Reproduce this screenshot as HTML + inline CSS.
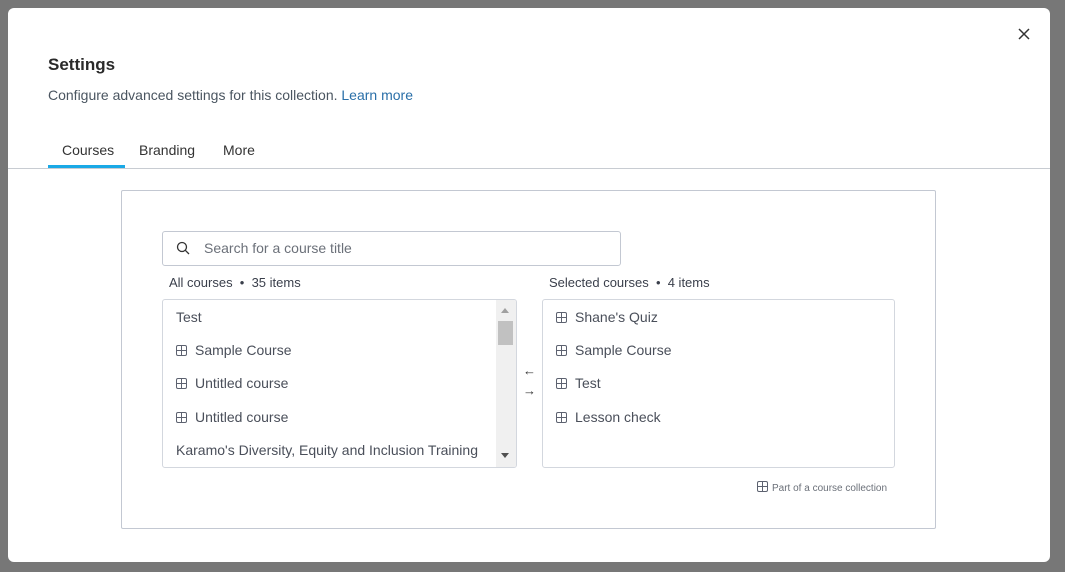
<!DOCTYPE html>
<html><head><style>
body{margin:0;width:1065px;height:572px;background:#777;font-family:"Liberation Sans",sans-serif;position:relative;overflow:hidden;color:#3a3f4b}
.m{position:absolute;left:8px;top:8px;width:1042px;height:554px;background:#fff;border-radius:6px}
.a{position:absolute;white-space:nowrap}
.g{display:inline-block;width:11px;height:11px;border:1px solid #5d6270;border-radius:2px;position:relative;vertical-align:-1px;margin-right:8px;box-sizing:border-box}
.g:before{content:"";position:absolute;left:4px;top:0;width:1px;height:9px;background:#5d6270}
.g:after{content:"";position:absolute;left:0;top:4px;width:9px;height:1px;background:#5d6270}
.it{position:absolute;font-size:14px;color:#4a4f5a;white-space:nowrap}
</style></head><body>
<div class="m">
<svg class="a" style="left:1010px;top:20px" width="12" height="12"><path d="M1 1L11 11M11 1L1 11" stroke="#333" stroke-width="1.5"/></svg>
<div class="a" style="left:40px;top:47px;font-size:17px;font-weight:bold;color:#2a2a2a">Settings</div>
<div class="a" style="left:40px;top:79px;font-size:14px;color:#4a5560">Configure advanced settings for this collection. <span style="color:#2a6fa8">Learn more</span></div>
<div class="a" style="left:54px;top:134px;font-size:14px;color:#333">Courses</div>
<div class="a" style="left:131px;top:134px;font-size:14px;color:#333">Branding</div>
<div class="a" style="left:215px;top:134px;font-size:14px;color:#333">More</div>
<div class="a" style="left:40px;top:157px;width:77px;height:3px;background:#1aa9e6"></div>
<div class="a" style="left:0;top:160px;width:1042px;height:1px;background:#c8ccd2"></div>
<div class="a" style="left:113px;top:182px;width:813px;height:337px;border:1px solid #c3c8d2;border-radius:2px"></div>
<div class="a" style="left:154px;top:223px;width:457px;height:33px;border:1px solid #c3c8d2;border-radius:3px"></div>
<svg class="a" style="left:168px;top:233px" width="14" height="14"><circle cx="6" cy="6" r="4.5" fill="none" stroke="#333" stroke-width="1.3"/><path d="M9.3 9.3L13 13" stroke="#333" stroke-width="1.3"/></svg>
<div class="a" style="left:196px;top:232px;font-size:14px;color:#6b7079">Search for a course title</div>
<div class="a" style="left:161px;top:267px;font-size:13px;color:#3a3f4b">All courses &nbsp;•&nbsp; 35 items</div>
<div class="a" style="left:541px;top:267px;font-size:13px;color:#3a3f4b">Selected courses &nbsp;•&nbsp; 4 items</div>
<div class="a" style="left:154px;top:291px;width:353px;height:167px;border:1px solid #d3d7de;border-radius:3px;overflow:hidden">
 <div class="a" style="right:0;top:0;width:20px;height:167px;background:#f0f0f0"></div>
 <div class="a" style="right:3px;top:21px;width:15px;height:24px;background:#c1c1c1"></div>
 <div class="a" style="right:7px;top:8px;border:4px solid transparent;border-bottom:5px solid #a0a0a0;border-top:0"></div>
 <div class="a" style="right:7px;top:153px;border:4px solid transparent;border-top:5px solid #505050;border-bottom:0"></div>
</div>
<div class="it" style="left:168px;top:301px">Test</div>
<div class="it" style="left:168px;top:334px"><span class="g"></span>Sample Course</div>
<div class="it" style="left:168px;top:367px"><span class="g"></span>Untitled course</div>
<div class="it" style="left:168px;top:401px"><span class="g"></span>Untitled course</div>
<div class="it" style="left:168px;top:434px">Karamo's Diversity, Equity and Inclusion Training</div>
<div class="a" style="left:515px;top:355px;font-size:13px;color:#333">←</div>
<div class="a" style="left:515px;top:375px;font-size:13px;color:#333">→</div>
<div class="a" style="left:534px;top:291px;width:351px;height:167px;border:1px solid #d3d7de;border-radius:3px"></div>
<div class="it" style="left:548px;top:301px"><span class="g"></span>Shane's Quiz</div>
<div class="it" style="left:548px;top:334px"><span class="g"></span>Sample Course</div>
<div class="it" style="left:548px;top:367px"><span class="g"></span>Test</div>
<div class="it" style="left:548px;top:401px"><span class="g"></span>Lesson check</div>
<div class="a" style="left:749px;top:473px;font-size:10px;color:#6b7079"><span class="g" style="margin-right:4px"></span>Part of a course collection</div>
</div>
</body></html>
